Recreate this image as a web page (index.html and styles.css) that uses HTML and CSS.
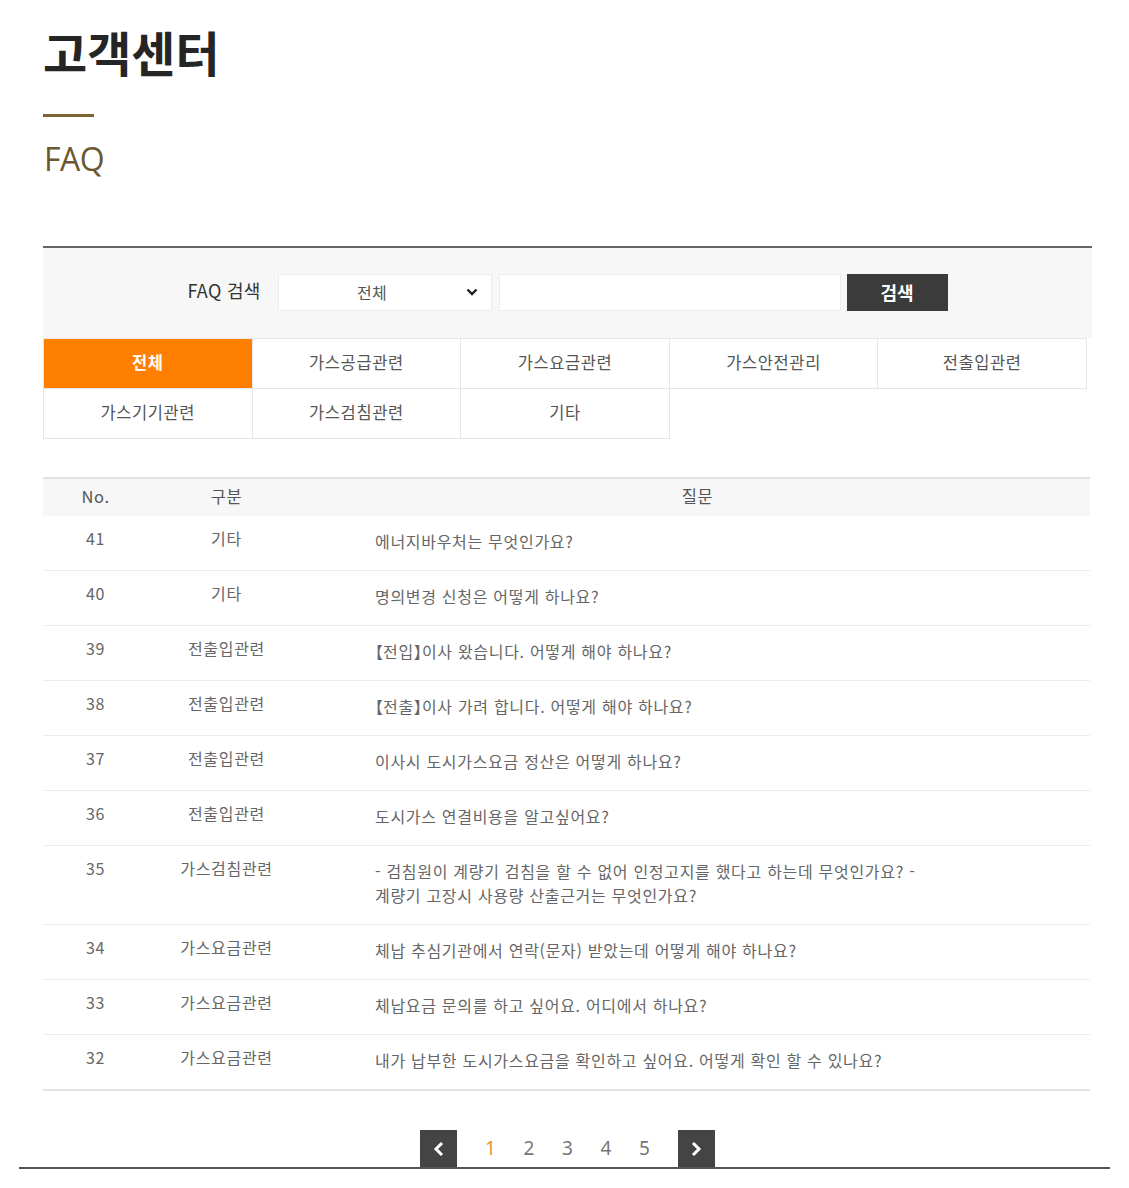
FILE: index.html
```html
<!DOCTYPE html>
<html lang="ko">
<head>
<meta charset="utf-8">
<title>고객센터 - FAQ</title>
<link rel="stylesheet" href="styles.css">
</head>
<body>
<div class="page">
  <header class="head">
    <h1 class="title">고객센터</h1>
    <div class="bar"></div>
    <h2 class="sub">FAQ</h2>
  </header>

  <section class="search">
    <label class="search-label">FAQ 검색</label>
    <div class="select">
      <span class="select-text">전체</span>
      <svg class="chev" width="12" height="8" viewBox="0 0 12 8"><polyline points="1.5,1.5 6,6 10.5,1.5" fill="none" stroke="#222" stroke-width="2.4"/></svg>
    </div>
    <div class="input"></div>
    <button class="btn">검색</button>
  </section>

  <nav class="cats">
    <div class="cat active">전체</div>
    <div class="cat">가스공급관련</div>
    <div class="cat">가스요금관련</div>
    <div class="cat">가스안전관리</div>
    <div class="cat">전출입관련</div>
    <div class="cat">가스기기관련</div>
    <div class="cat">가스검침관련</div>
    <div class="cat">기타</div>
  </nav>

  <table class="list">
    <thead>
      <tr><th class="c-no">No.</th><th class="c-cat">구분</th><th class="c-q">질문</th></tr>
    </thead>
    <tbody>
      <tr><td class="c-no">41</td><td class="c-cat">기타</td><td class="c-q">에너지바우처는 무엇인가요?</td></tr>
      <tr><td class="c-no">40</td><td class="c-cat">기타</td><td class="c-q">명의변경 신청은 어떻게 하나요?</td></tr>
      <tr><td class="c-no">39</td><td class="c-cat">전출입관련</td><td class="c-q"><span class="br">【</span>전입<span class="br">】</span>이사 왔습니다. 어떻게 해야 하나요?</td></tr>
      <tr><td class="c-no">38</td><td class="c-cat">전출입관련</td><td class="c-q"><span class="br">【</span>전출<span class="br">】</span>이사 가려 합니다. 어떻게 해야 하나요?</td></tr>
      <tr><td class="c-no">37</td><td class="c-cat">전출입관련</td><td class="c-q">이사시 도시가스요금 정산은 어떻게 하나요?</td></tr>
      <tr><td class="c-no">36</td><td class="c-cat">전출입관련</td><td class="c-q">도시가스 연결비용을 알고싶어요?</td></tr>
      <tr><td class="c-no">35</td><td class="c-cat">가스검침관련</td><td class="c-q">- 검침원이 계량기 검침을 할 수 없어 인정고지를 했다고 하는데 무엇인가요? -<br>계량기 고장시 사용량 산출근거는 무엇인가요?</td></tr>
      <tr><td class="c-no">34</td><td class="c-cat">가스요금관련</td><td class="c-q">체납 추심기관에서 연락(문자) 받았는데 어떻게 해야 하나요?</td></tr>
      <tr><td class="c-no">33</td><td class="c-cat">가스요금관련</td><td class="c-q">체납요금 문의를 하고 싶어요. 어디에서 하나요?</td></tr>
      <tr><td class="c-no">32</td><td class="c-cat">가스요금관련</td><td class="c-q">내가 납부한 도시가스요금을 확인하고 싶어요. 어떻게 확인 할 수 있나요?</td></tr>
    </tbody>
  </table>

  <div class="pager">
    <a class="pg-btn"><svg width="12" height="16" viewBox="0 0 12 16"><polyline points="9,2 3,8 9,14" fill="none" stroke="#fff" stroke-width="3"/></svg></a>
    <div class="pg-nums">
      <a class="pg-num on">1</a>
      <a class="pg-num">2</a>
      <a class="pg-num">3</a>
      <a class="pg-num">4</a>
      <a class="pg-num">5</a>
    </div>
    <a class="pg-btn"><svg width="12" height="16" viewBox="0 0 12 16"><polyline points="3,2 9,8 3,14" fill="none" stroke="#fff" stroke-width="3"/></svg></a>
  </div>
</div>
<div class="foot-line"></div>
</body>
</html>
```

FILE: styles.css
```css
* { box-sizing: border-box; }
html, body { margin: 0; padding: 0; background: #fff; }
body {
  font-family: "Noto Sans CJK KR", "Noto Sans", sans-serif;
  color: #555;
}
.page {
  width: 1049px;
  margin-left: 43px;
}
.head { padding-top: 18px; }
.title {
  margin: 0;
  font-size: 48px;
  line-height: 66px;
  font-weight: 700;
  color: #252525;
  letter-spacing: 0;
}
.bar {
  width: 51px;
  height: 3px;
  background: #7b6431;
  margin-top: 30px;
}
.sub {
  margin: 20px 0 0 1px;
  font-family: "Open Sans", "Noto Sans", sans-serif;
  font-size: 32px;
  line-height: 44px;
  font-weight: 400;
  color: #6b5832;
  letter-spacing: -0.5px;
}
.search {
  margin-top: 65px;
  border-top: 2px solid #666;
  background: #f7f7f7;
  height: 92px;
  display: flex;
  justify-content: center;
  align-items: center;
  padding-bottom: 2px;
}
.search-label {
  font-size: 18px;
  letter-spacing: 0.3px;
  color: #333;
  margin-right: 17px;
  margin-top: -4px;
}
.select {
  width: 214px;
  height: 37px;
  background: #fff;
  border: 1px solid #ececec;
  display: flex;
  align-items: center;
  position: relative;
}
.select-text {
  flex: 1;
  text-align: center;
  font-size: 16px;
  letter-spacing: 0.5px;
  color: #555;
  padding-left: 0;
}
.chev { margin-right: 13px; }
.input {
  width: 342px;
  height: 37px;
  background: #fff;
  border: 1px solid #ececec;
  margin-left: 7px;
}
.btn {
  width: 101px;
  height: 37px;
  margin-left: 6px;
  background: #3b3b3b;
  border: 0;
  color: #fff;
  font-family: "Noto Sans CJK KR", sans-serif;
  font-weight: 700;
  font-size: 18px;
  padding: 0;
}
.cats {
  width: 1044px;
  display: grid;
  grid-template-columns: repeat(5, 1fr);
  border-left: 1px solid #e6e6e6;
  border-top: 1px solid #e6e6e6;
}
.cat {
  height: 50px;
  border-right: 1px solid #e6e6e6;
  border-bottom: 1px solid #e6e6e6;
  display: flex;
  align-items: center;
  justify-content: center;
  font-size: 16.5px;
  letter-spacing: 0.6px;
  color: #555;
  padding-bottom: 4px;
}
.cat.active {
  background: #ff7f00;
  color: #fff;
  font-weight: 700;
}
.list {
  margin-top: 38px;
  width: 1047px;
  border-collapse: collapse;
  border-top: 2px solid #e2e2e2;
  border-bottom: 2px solid #e2e2e2;
}
.list th {
  background: #f7f7f7;
  height: 38px;
  font-weight: 400;
  font-size: 16.5px;
  letter-spacing: 0.5px;
  color: #555;
  padding: 0 0 4px;
}
.list td {
  border-top: 1px solid #ececec;
  font-size: 16px;
  letter-spacing: 0.7px;
  line-height: 24px;
  vertical-align: top;
  padding: 10px 0 20px;
  color: #666;
}
.list tbody tr:first-child td { border-top: 0; }
.c-no { width: 105px; text-align: center; }
.c-cat { width: 157px; text-align: center; }
.list td.c-q { text-align: left; padding-left: 70px; padding-top: 13px; padding-bottom: 17px; }
.list th.c-q { text-align: center; }
.br { font-feature-settings: "halt" 1; letter-spacing: 0; }
.pager {
  margin-top: 39px;
  display: flex;
  justify-content: center;
  align-items: center;
}
.pg-btn {
  width: 37px;
  height: 37px;
  background: #444;
  display: flex;
  align-items: center;
  justify-content: center;
}
.pg-nums {
  display: flex;
  margin: 0 14px;
}
.pg-num {
  width: 38.5px;
  text-align: center;
  font-family: "Noto Sans", sans-serif;
  font-size: 19px;
  color: #777;
  line-height: 37px;
}
.pg-num.on { color: #e8923c; }
.foot-line {
  margin-left: 19px;
  width: 1091px;
  height: 2px;
  background: #555;
}
```
